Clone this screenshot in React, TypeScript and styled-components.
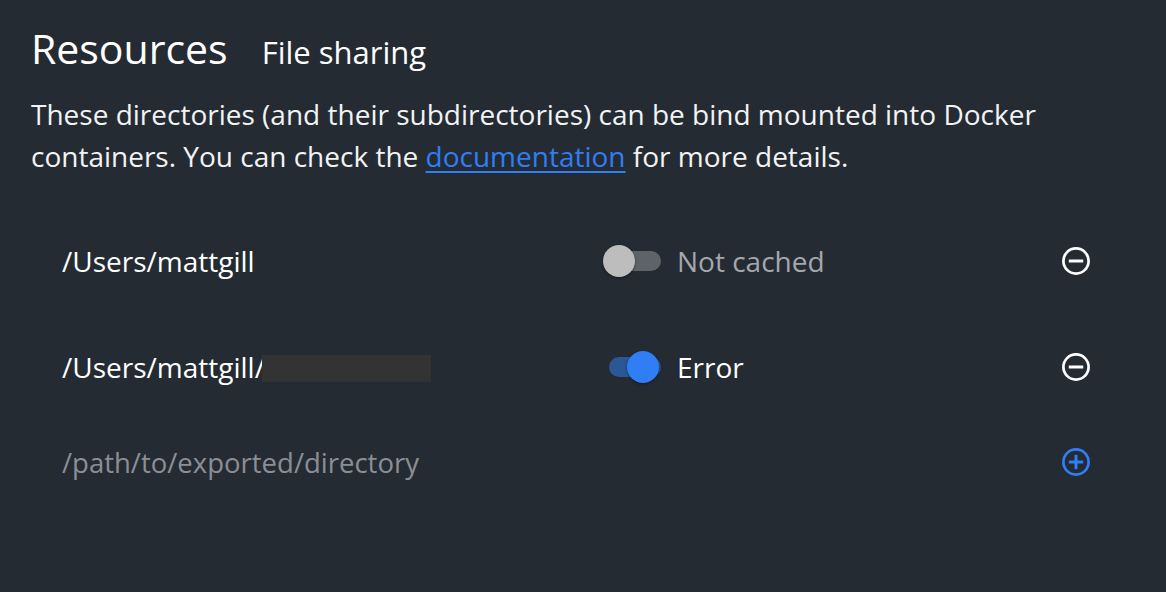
import styled, { createGlobalStyle } from 'styled-components'

const GlobalStyle = createGlobalStyle`
  html, body {
    margin: 0;
    padding: 0;
    background: #252b33;
  }
  body {
    font-family: "Open Sans", "Noto Sans", sans-serif;
    color: #ffffff;
  }
`

const Page = styled.div`
  width: 1166px;
  height: 592px;
  box-sizing: border-box;
  padding: 18px 0 0 31px;
  background: #252b33;
  overflow: hidden;
`

const TitleBar = styled.div`
  display: flex;
  align-items: baseline;
  gap: 34px;
  height: 60px;
`

const Title = styled.h1`
  margin: 0;
  font-size: 41px;
  font-weight: 400;
  line-height: 60px;
`

const Subtitle = styled.h2`
  margin: 0;
  font-size: 31px;
  font-weight: 400;
`

const Description = styled.p`
  margin: 15px 0 0;
  width: 1080px;
  font-size: 28px;
  line-height: 42px;
  color: #f2f3f4;

  a {
    color: #2f7ef5;
    text-decoration: underline;
    text-underline-offset: 4px;
  }
`

const List = styled.div`
  display: flex;
  flex-direction: column;
  margin-top: 56px;
`

const Row = styled.div<{ $gap?: number }>`
  display: grid;
  grid-template-columns: 541px 1fr 30px;
  align-items: center;
  height: 56px;
  padding: 0 75px 0 31px;
  margin-top: ${(p) => p.$gap ?? 0}px;
`

const Path = styled.span<{ $placeholder?: boolean }>`
  display: flex;
  align-items: center;
  font-size: ${(p) => (p.$placeholder ? '27.5px' : '28px')};
  color: ${(p) => (p.$placeholder ? '#8a8f95' : '#ffffff')};
`

const Redacted = styled.span`
  display: inline-block;
  width: 169px;
  height: 27px;
  margin-left: -3px;
  margin-top: 2px;
  background: #333333;
`

const Status = styled.div`
  display: flex;
  align-items: center;
  gap: 16px;
`

const Switch = styled.span<{ $on?: boolean }>`
  position: relative;
  display: inline-block;
  width: 52px;
  height: 20px;
  margin-left: 6px;
  border-radius: 10px;
  background: ${(p) => (p.$on ? '#2b5795' : '#5d6367')};

  &::after {
    content: '';
    position: absolute;
    top: -6px;
    left: ${(p) => (p.$on ? '18px' : '-6px')};
    width: 32px;
    height: 32px;
    border-radius: 50%;
    background: ${(p) => (p.$on ? '#2f7ef5' : '#bdbdbd')};
    box-shadow: 0 1px 3px rgba(0, 0, 0, 0.4);
  }
`

const StatusLabel = styled.span<{ $muted?: boolean }>`
  font-size: 28px;
  color: ${(p) => (p.$muted ? '#a3a8ad' : '#ffffff')};
`

const IconButton = styled.button<{ $color: string }>`
  display: flex;
  align-items: center;
  justify-content: center;
  width: 30px;
  height: 30px;
  padding: 0;
  border: none;
  background: none;
  color: ${(p) => p.$color};
  cursor: pointer;
`

function CircleIcon({ plus }: { plus?: boolean }) {
  return (
    <svg width="30" height="30" viewBox="0 0 30 30" fill="none">
      <circle cx="15" cy="15" r="12.6" stroke="currentColor" strokeWidth="2.7" />
      <line x1="7.8" y1="15" x2="22.2" y2="15" stroke="currentColor" strokeWidth="3" />
      {plus && <line x1="15" y1="7.8" x2="15" y2="22.2" stroke="currentColor" strokeWidth="3" />}
    </svg>
  )
}

export default function App() {
  return (
    <>
      <GlobalStyle />
      <Page>
        <TitleBar>
          <Title>Resources</Title>
          <Subtitle>File sharing</Subtitle>
        </TitleBar>
        <Description>
          These directories (and their subdirectories) can be bind mounted into Docker
          containers. You can check the <a href="#">documentation</a> for more details.
        </Description>
        <List>
          <Row>
            <Path>/Users/mattgill</Path>
            <Status>
              <Switch />
              <StatusLabel $muted>Not cached</StatusLabel>
            </Status>
            <IconButton $color="#ffffff">
              <CircleIcon />
            </IconButton>
          </Row>
          <Row $gap={50}>
            <Path>
              /Users/mattgill/
              <Redacted />
            </Path>
            <Status>
              <Switch $on />
              <StatusLabel>Error</StatusLabel>
            </Status>
            <IconButton $color="#ffffff">
              <CircleIcon />
            </IconButton>
          </Row>
          <Row $gap={39}>
            <Path $placeholder>/path/to/exported/directory</Path>
            <span />
            <IconButton $color="#2f7ef5">
              <CircleIcon plus />
            </IconButton>
          </Row>
        </List>
      </Page>
    </>
  )
}
